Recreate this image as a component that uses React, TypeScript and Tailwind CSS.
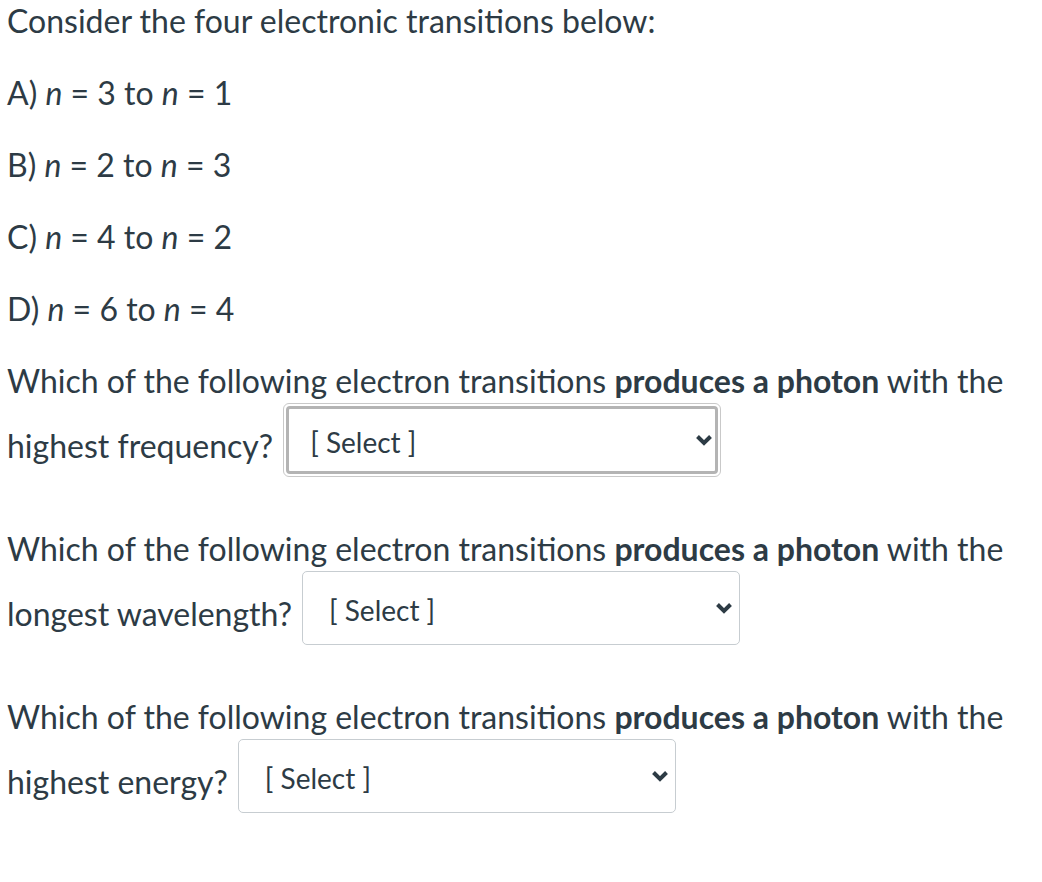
import { ReactNode } from 'react';

const transitions = [
  { label: 'A)', from: 3, to: 1 },
  { label: 'B)', from: 2, to: 3 },
  { label: 'C)', from: 4, to: 2 },
  { label: 'D)', from: 6, to: 4 },
];

const questions = [
  { ending: 'highest frequency?', focused: true },
  { ending: 'longest wavelength?', focused: false },
  { ending: 'highest energy?', focused: false },
];

function Chevron() {
  return (
    <svg width="18" height="12" viewBox="0 0 18 12" className="shrink-0">
      <path d="M2.5 2.5 L9 9 L15.5 2.5" fill="none" stroke="#2d3b45" strokeWidth="4" strokeLinejoin="miter" />
    </svg>
  );
}

function SelectBox({ focused }: { focused: boolean }) {
  const wrap = (content: ReactNode) =>
    focused ? (
      <div className="w-[438px] h-[74px] border border-[#c9c9c9] rounded-[6px] p-[2px] bg-white shrink-0">
        <div className="h-full border-[3px] border-[#b4b4b4] rounded-[4px] flex items-center justify-between pl-[21px] pr-[2px]">
          {content}
        </div>
      </div>
    ) : (
      <div className="w-[438px] h-[74px] border border-[#c7cdd1] rounded-[5px] bg-white flex items-center justify-between pl-[26px] pr-[6px] shrink-0">
        {content}
      </div>
    );

  return wrap(
    <>
      <span className="text-[28px] leading-none pt-[3px]">[ Select ]</span>
      <Chevron />
    </>
  );
}

export default function App() {
  return (
    <div
      className="min-h-screen bg-white pl-[7px] text-[#2d3b45] text-[32px] leading-[44px]"
      style={{ fontFamily: 'Lato, "Open Sans", sans-serif' }}
    >
      <p className="mb-[28px] -mt-[1px]">Consider the four electronic transitions below:</p>

      {transitions.map((t) => (
        <p key={t.label} className="mb-[28px]">
          {t.label} <i>n</i> = {t.from} to <i>n</i> = {t.to}
        </p>
      ))}

      {questions.map((q) => (
        <div key={q.ending} className="mb-[50px]">
          <p>
            Which of the following electron transitions <strong className="font-bold">produces a photon</strong> with the
          </p>
          <div className="flex items-center gap-[10px]">
            <span className="pt-[12px]">{q.ending}</span>
            <SelectBox focused={q.focused} />
          </div>
        </div>
      ))}
    </div>
  );
}
